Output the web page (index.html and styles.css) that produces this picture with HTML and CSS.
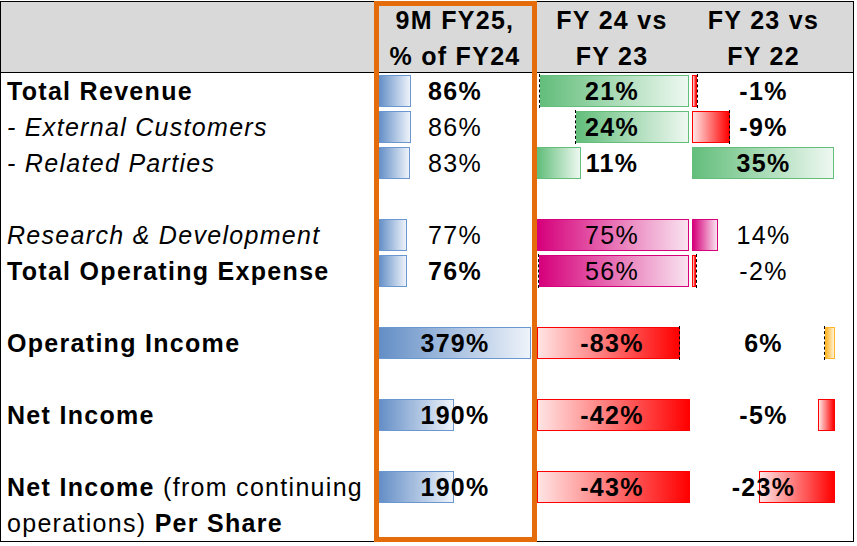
FILE: index.html
```html
<!DOCTYPE html>
<html>
<head>
<meta charset="utf-8">
<link rel="stylesheet" href="styles.css">
</head>
<body>
<div class="sheet">
  <div class="head">
    <div class="hcell"></div>
    <div class="hcell b">9M FY25,<br>% of FY24</div>
    <div class="hcell b">FY 24 vs<br>FY 23</div>
    <div class="hcell b">FY 23 vs<br>FY 22</div>
    <div class="hcell"></div>
  </div>
  <div class="grid">
    <!-- Total Revenue -->
    <div class="label b">Total Revenue</div>
    <div class="val b"><span class="bar blue" style="left:2px;width:33px"></span><span class="t">86%</span></div>
    <div class="val b"><span class="bar green" style="left:6px;width:149px"></span><span class="axis" style="left:5px"></span><span class="t">21%</span></div>
    <div class="val b"><span class="bar red" style="left:2px;width:5px"></span><span class="axis" style="left:7px"></span><span class="t">-1%</span></div>
    <div class="val"></div>

    <!-- External -->
    <div class="label i">- External Customers</div>
    <div class="val"><span class="bar blue" style="left:2px;width:33px"></span><span class="t">86%</span></div>
    <div class="val b"><span class="bar green" style="left:42px;width:113px"></span><span class="axis" style="left:41px"></span><span class="t">24%</span></div>
    <div class="val b"><span class="bar red" style="left:2px;width:38px"></span><span class="axis" style="left:39px"></span><span class="t">-9%</span></div>
    <div class="val"></div>

    <!-- Related -->
    <div class="label i">- Related Parties</div>
    <div class="val"><span class="bar blue" style="left:2px;width:32px"></span><span class="t">83%</span></div>
    <div class="val b"><span class="bar green" style="left:3px;width:44px"></span><span class="t">11%</span></div>
    <div class="val b"><span class="bar green" style="left:2px;width:142px"></span><span class="t">35%</span></div>
    <div class="val"></div>

    <div class="blank"></div>

    <!-- R&D -->
    <div class="label i">Research &amp; Development</div>
    <div class="val"><span class="bar blue" style="left:2px;width:29px"></span><span class="t">77%</span></div>
    <div class="val"><span class="bar magenta" style="left:3px;width:152px"></span><span class="t">75%</span></div>
    <div class="val"><span class="bar magenta" style="left:2px;width:26px"></span><span class="t">14%</span></div>
    <div class="val"></div>

    <!-- Total OpEx -->
    <div class="label b">Total Operating Expense</div>
    <div class="val b"><span class="bar blue" style="left:2px;width:29px"></span><span class="t">76%</span></div>
    <div class="val"><span class="bar magenta" style="left:5px;width:150px"></span><span class="axis" style="left:4px"></span><span class="t">56%</span></div>
    <div class="val"><span class="bar red" style="left:2px;width:4px"></span><span class="axis" style="left:6px"></span><span class="t">-2%</span></div>
    <div class="val"></div>

    <div class="blank"></div>

    <!-- Operating Income -->
    <div class="label b">Operating Income</div>
    <div class="val b"><span class="bar blue" style="left:2px;width:153px"></span><span class="t">379%</span></div>
    <div class="val b"><span class="bar red" style="left:3px;width:143px"></span><span class="axis" style="left:145px"></span><span class="t">-83%</span></div>
    <div class="val b"><span class="bar orange" style="left:135px;width:10px"></span><span class="axis" style="left:134px"></span><span class="t">6%</span></div>
    <div class="val"></div>

    <div class="blank"></div>

    <!-- Net Income -->
    <div class="label b">Net Income</div>
    <div class="val b"><span class="bar blue" style="left:2px;width:76px"></span><span class="t">190%</span></div>
    <div class="val b"><span class="bar red" style="left:3px;width:153px"></span><span class="t">-42%</span></div>
    <div class="val b"><span class="bar red" style="left:128px;width:17px"></span><span class="t">-5%</span></div>
    <div class="val"></div>

    <div class="blank"></div>

    <!-- Net Income per share -->
    <div class="label tall">
      <div class="line"><span class="b">Net Income</span> (from continuing</div>
      <div class="line">operations) <span class="b">Per Share</span></div>
    </div>
    <div class="val b"><span class="bar blue" style="left:2px;width:76px"></span><span class="t">190%</span></div>
    <div class="val b"><span class="bar red" style="left:3px;width:153px"></span><span class="t">-43%</span></div>
    <div class="val b"><span class="bar red" style="left:69px;width:76px"></span><span class="t">-23%</span></div>
    <div class="val"></div>
    <div class="val"></div>
    <div class="val"></div>
    <div class="val"></div>
    <div class="val"></div>
  </div>
  <div class="highlight"></div>
</div>
</body>
</html>
```

FILE: styles.css
```css
html, body {
  margin: 0;
  padding: 0;
  background: #ffffff;
}

body {
  font-family: "Liberation Sans", Arial, sans-serif;
  font-size: 25px;
  letter-spacing: 1.3px;
  color: #000000;
}

.sheet {
  position: relative;
  margin-top: 1px;
  width: 852px;
  border: 1px solid #000000;
}

.head {
  display: grid;
  grid-template-columns: 375px 158px 156px 147px 16px;
  height: 70px;
  background: #d9d9d9;
  border-bottom: 1px solid #000000;
}

.hcell {
  display: flex;
  align-items: center;
  justify-content: center;
  text-align: center;
  line-height: 36px;
}

.grid {
  display: grid;
  grid-template-columns: 375px 158px 156px 147px 16px;
  grid-auto-rows: 36px;
}

.b {
  font-weight: bold;
}

.i {
  font-style: italic;
}

.label {
  padding-left: 6px;
  line-height: 36px;
  white-space: nowrap;
}

.label.tall {
  grid-row: span 2;
  display: flex;
  flex-direction: column;
}

.line {
  height: 36px;
  line-height: 37px;
}

.blank {
  grid-column: 1 / -1;
}

.val {
  position: relative;
  display: flex;
  align-items: center;
  justify-content: center;
  line-height: 36px;
}

.val .t {
  position: relative;
  z-index: 2;
}

.bar {
  position: absolute;
  top: 2px;
  height: 32px;
  box-sizing: border-box;
  border: 1px solid;
  z-index: 1;
}

.axis {
  position: absolute;
  top: 1px;
  height: 34px;
  width: 0;
  border-left: 1px dashed #000000;
  z-index: 1;
}

.blue {
  border-color: #6a97d0;
  background: linear-gradient(to right, #638ec6, #eef3fa);
}

.green {
  border-color: #63be7b;
  background: linear-gradient(to right, #63be7b, #eef8f1);
}

.magenta {
  border-color: #d6007b;
  background: linear-gradient(to right, #d6007b, #f9e3ef);
}

.red {
  border-color: #ff0000;
  background: linear-gradient(to right, #ffe4e4, #ff0000);
}

.orange {
  border-color: #ffb628;
  background: linear-gradient(to right, #ffb628, #fff1d6);
}

.highlight {
  position: absolute;
  left: 373px;
  top: -1px;
  width: 163px;
  height: 541px;
  box-sizing: border-box;
  border: 5px solid #e46c0a;
  z-index: 3;
  pointer-events: none;
}
```
